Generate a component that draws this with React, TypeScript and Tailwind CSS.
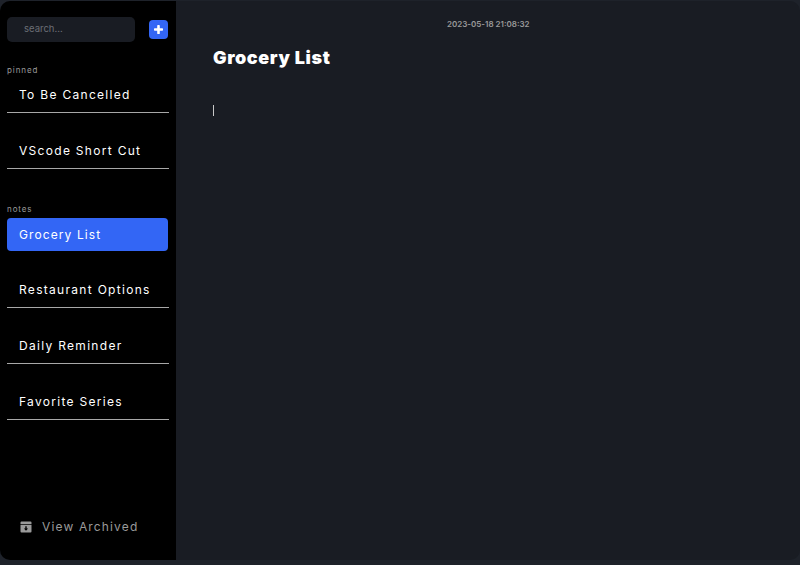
import React from "react";

const pinned = ["To Be Cancelled", "VScode Short Cut"];
const notes = ["Restaurant Options", "Daily Reminder", "Favorite Series"];

function NoteRow({ title }: { title: string }) {
  return (
    <div className="mt-[6px] h-[50px] w-[162px] border-b border-[#a8a8a8] pl-[12px] pt-[22px] text-[12px] leading-[20px] font-normal tracking-[1.3px] text-white">
      {title}
    </div>
  );
}

export default function App() {
  return (
    <div className="h-[565px] w-[800px] overflow-hidden bg-[#1e222a] pt-px font-['Inter','Liberation_Sans',sans-serif]">
      <div className="flex h-[559px] w-full rounded-[10px] bg-[#191c23]">
        <aside className="flex h-full w-[176px] shrink-0 flex-col rounded-l-[10px] bg-black pl-[7px]">
          <div className="mt-[16px] flex items-center">
            <div className="flex h-[25px] w-[128px] items-center rounded-[5px] bg-[#191c23] pl-[17px] text-[9.5px] text-[#6b6e75]">
              search...
            </div>
            <div className="ml-[14px] flex h-[19px] w-[19px] items-center justify-center rounded-[4px] bg-[#3366f5]">
              <svg width="9" height="9" viewBox="0 0 9 9" fill="white">
                <path d="M3.2 0.6a1 1 0 0 1 1-0.6h0.6a1 1 0 0 1 1 0.6V3.2h2.6a1 1 0 0 1 0.6 1v0.6a1 1 0 0 1-0.6 1H5.8v2.6a1 1 0 0 1-1 0.6H4.2a1 1 0 0 1-1-0.6V5.800H0.6a1 1 0 0 1-0.6-1V4.2a1 1 0 0 1 0.6-1h2.6z" />
              </svg>
            </div>
          </div>
          <div className="mt-[22px] text-[8px] leading-[12px] tracking-[0.9px] text-[#9a9a9a]">pinned</div>
          <div className="-mt-[19px]">
            {pinned.map((t) => (
              <NoteRow key={t} title={t} />
            ))}
          </div>
          <div className="mt-[34px] text-[8px] leading-[12px] tracking-[0.9px] text-[#9a9a9a]">notes</div>
          <div className="mt-[3px] mb-px flex h-[33px] w-[161px] items-center rounded-[4px] bg-[#3366f5] pl-[12px] text-[12px] font-normal tracking-[1.1px] text-white">
            Grocery List
          </div>
          {notes.map((t) => (
            <NoteRow key={t} title={t} />
          ))}
          <div className="mt-auto mb-[25px] ml-[13px] flex items-center text-[#9a9a9a]">
            <svg width="12" height="12" viewBox="0 0 12 12" fill="currentColor">
              <path d="M1.5 0.5h9a1 1 0 0 1 1 1V3H0.5V1.500a1 1 0 0 1 1-1z" />
              <path fillRule="evenodd" d="M0.5 3.800h11V10.500a1 1 0 0 1-1 1h-9a1 1 0 0 1-1-1zM5.300 5.200v2.300H3.900L6 9.800 8.100 7.500H6.700V5.200z" />
            </svg>
            <span className="ml-[10px] text-[12px] leading-[16px] tracking-[1.15px]">View Archived</span>
          </div>
        </aside>
        <main className="flex-1 pl-[37px]">
          <div className="mt-[17px] pl-[234px] text-[8px] leading-[12px] font-semibold tracking-[0px] whitespace-nowrap text-[#999999]">
            2023-05-18 21:08:32
          </div>
          <h1 className="mt-[15px] text-[18px] leading-[26px] font-black tracking-[0.6px] text-white">Grocery List</h1>
          <div className="mt-[34px] h-[11px] w-px bg-[#c8c8c8]" />
        </main>
      </div>
    </div>
  );
}
